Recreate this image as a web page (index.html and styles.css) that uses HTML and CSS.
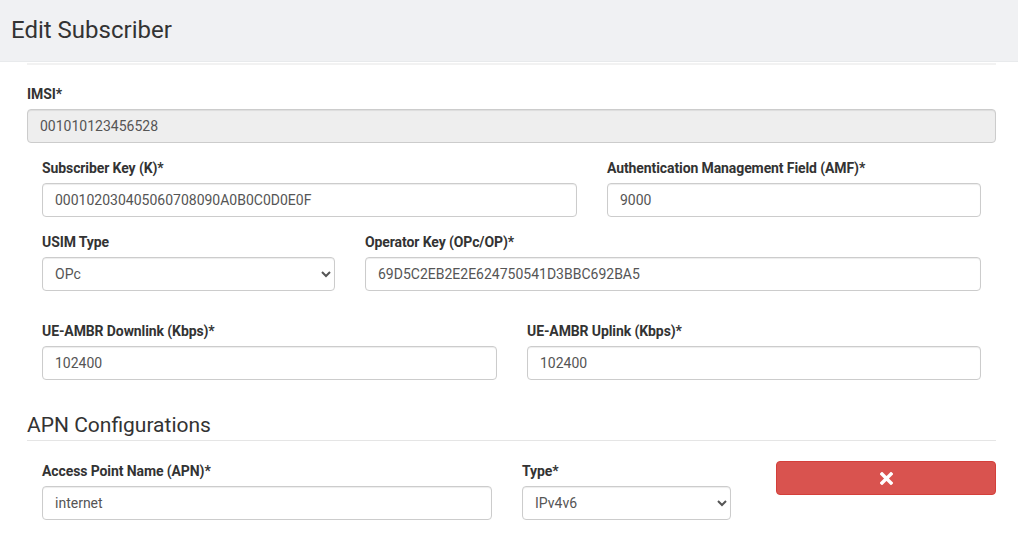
FILE: index.html
```html
<!DOCTYPE html>
<html lang="en">
<head>
  <meta charset="UTF-8">
  <meta name="viewport" content="width=device-width, initial-scale=1">
  <title>Edit Subscriber</title>
  <link rel="stylesheet" href="styles.css">
</head>
<body>

<div class="modal-header">
  <h2>Edit Subscriber</h2>
</div>

<form class="subscriber-form">
  <div class="top-rule"></div>

  <div class="form-group">
    <label for="imsi">IMSI*</label>
    <input type="text" id="imsi" class="form-control" value="001010123456528" disabled>
  </div>

  <div class="fieldset">
    <div class="row row-security">
      <div class="form-group">
        <label for="k">Subscriber Key (K)*</label>
        <input type="text" id="k" class="form-control" value="000102030405060708090A0B0C0D0E0F">
      </div>
      <div class="form-group">
        <label for="amf">Authentication Management Field (AMF)*</label>
        <input type="text" id="amf" class="form-control" value="9000">
      </div>
    </div>

    <div class="row row-opc">
      <div class="form-group">
        <label for="usim">USIM Type</label>
        <select id="usim" class="form-control">
          <option selected>OPc</option>
          <option>OP</option>
        </select>
      </div>
      <div class="form-group">
        <label for="opc">Operator Key (OPc/OP)*</label>
        <input type="text" id="opc" class="form-control" value="69D5C2EB2E2E624750541D3BBC692BA5">
      </div>
    </div>
  </div>

  <div class="fieldset ambr">
    <div class="row row-half">
      <div class="form-group">
        <label for="downlink">UE-AMBR Downlink (Kbps)*</label>
        <input type="text" id="downlink" class="form-control" value="102400">
      </div>
      <div class="form-group">
        <label for="uplink">UE-AMBR Uplink (Kbps)*</label>
        <input type="text" id="uplink" class="form-control" value="102400">
      </div>
    </div>
  </div>

  <legend>APN Configurations</legend>

  <div class="row row-apn">
    <div class="form-group">
      <label for="apn">Access Point Name (APN)*</label>
      <input type="text" id="apn" class="form-control" value="internet">
    </div>
    <div class="form-group">
      <label for="pdn">Type*</label>
      <select id="pdn" class="form-control">
        <option>IPv4</option>
        <option>IPv6</option>
        <option selected>IPv4v6</option>
      </select>
    </div>
    <button type="button" class="btn-remove" title="Remove">
      <svg width="13" height="13" viewBox="0 0 13 13">
        <path d="M2 2 L11 11 M11 2 L2 11" stroke="#fff" stroke-width="3.4" stroke-linecap="square"/>
      </svg>
    </button>
  </div>
</form>

</body>
</html>
```

FILE: styles.css
```css
body {
  margin: 0;
  font-family: Roboto, "Liberation Sans", Arial, sans-serif;
  font-size: 14px;
  line-height: 20px;
  color: #333;
  background: #fff;
}

.modal-header {
  background-color: #f0f1f3;
  height: 61px;
  border-bottom: 1px solid #e8eaec;
  padding: 0 11px;
}

.modal-header h2 {
  margin: 0;
  font-size: 24px;
  font-weight: 400;
  line-height: 60px;
  color: #333;
}

.subscriber-form {
  padding: 0 22px 0 27px;
}

.top-rule {
  height: 2px;
  background: #f2f2f2;
  margin-top: 1px;
  margin-bottom: 19px;
}

.form-group {
  margin-bottom: 15px;
}

.form-group label {
  display: block;
  font-weight: 700;
  margin-bottom: 5px;
  letter-spacing: -0.1px;
}

.form-control {
  display: block;
  box-sizing: border-box;
  width: 100%;
  height: 34px;
  padding: 6px 12px;
  font-family: inherit;
  font-size: 14px;
  color: #555;
  background: #fff;
  border: 1px solid #ccc;
  border-radius: 4px;
  box-shadow: inset 0 1px 1px rgba(0, 0, 0, 0.075);
}

.form-control:disabled {
  background: #eee;
  color: #555;
}

select.form-control {
  padding: 6px 8px;
}

.fieldset {
  padding: 0 15px;
}

.row {
  display: grid;
  column-gap: 30px;
}

.row-security {
  grid-template-columns: 535px 374px;
}

.row-opc {
  grid-template-columns: 293px 616px;
}

.ambr {
  padding-top: 15px;
}

.row-half {
  grid-template-columns: 455px 454px;
}

legend {
  display: block;
  box-sizing: border-box;
  width: 100%;
  font-size: 21px;
  line-height: 30px;
  margin-top: 15px;
  margin-bottom: 20px;
  padding: 0;
  color: #333;
  border-bottom: 1px solid #e5e5e5;
}

.row-apn {
  grid-template-columns: 450px 209px 220px;
  column-gap: 30px;
  padding-left: 15px;
  align-items: start;
}

.row-apn .btn-remove {
  margin-left: 15px;
  width: 220px;
}

.btn-remove {
  height: 34px;
  display: flex;
  align-items: center;
  justify-content: center;
  background-color: #d9534f;
  border: 1px solid #d43f3a;
  border-radius: 4px;
  cursor: pointer;
  padding: 0;
}
```
